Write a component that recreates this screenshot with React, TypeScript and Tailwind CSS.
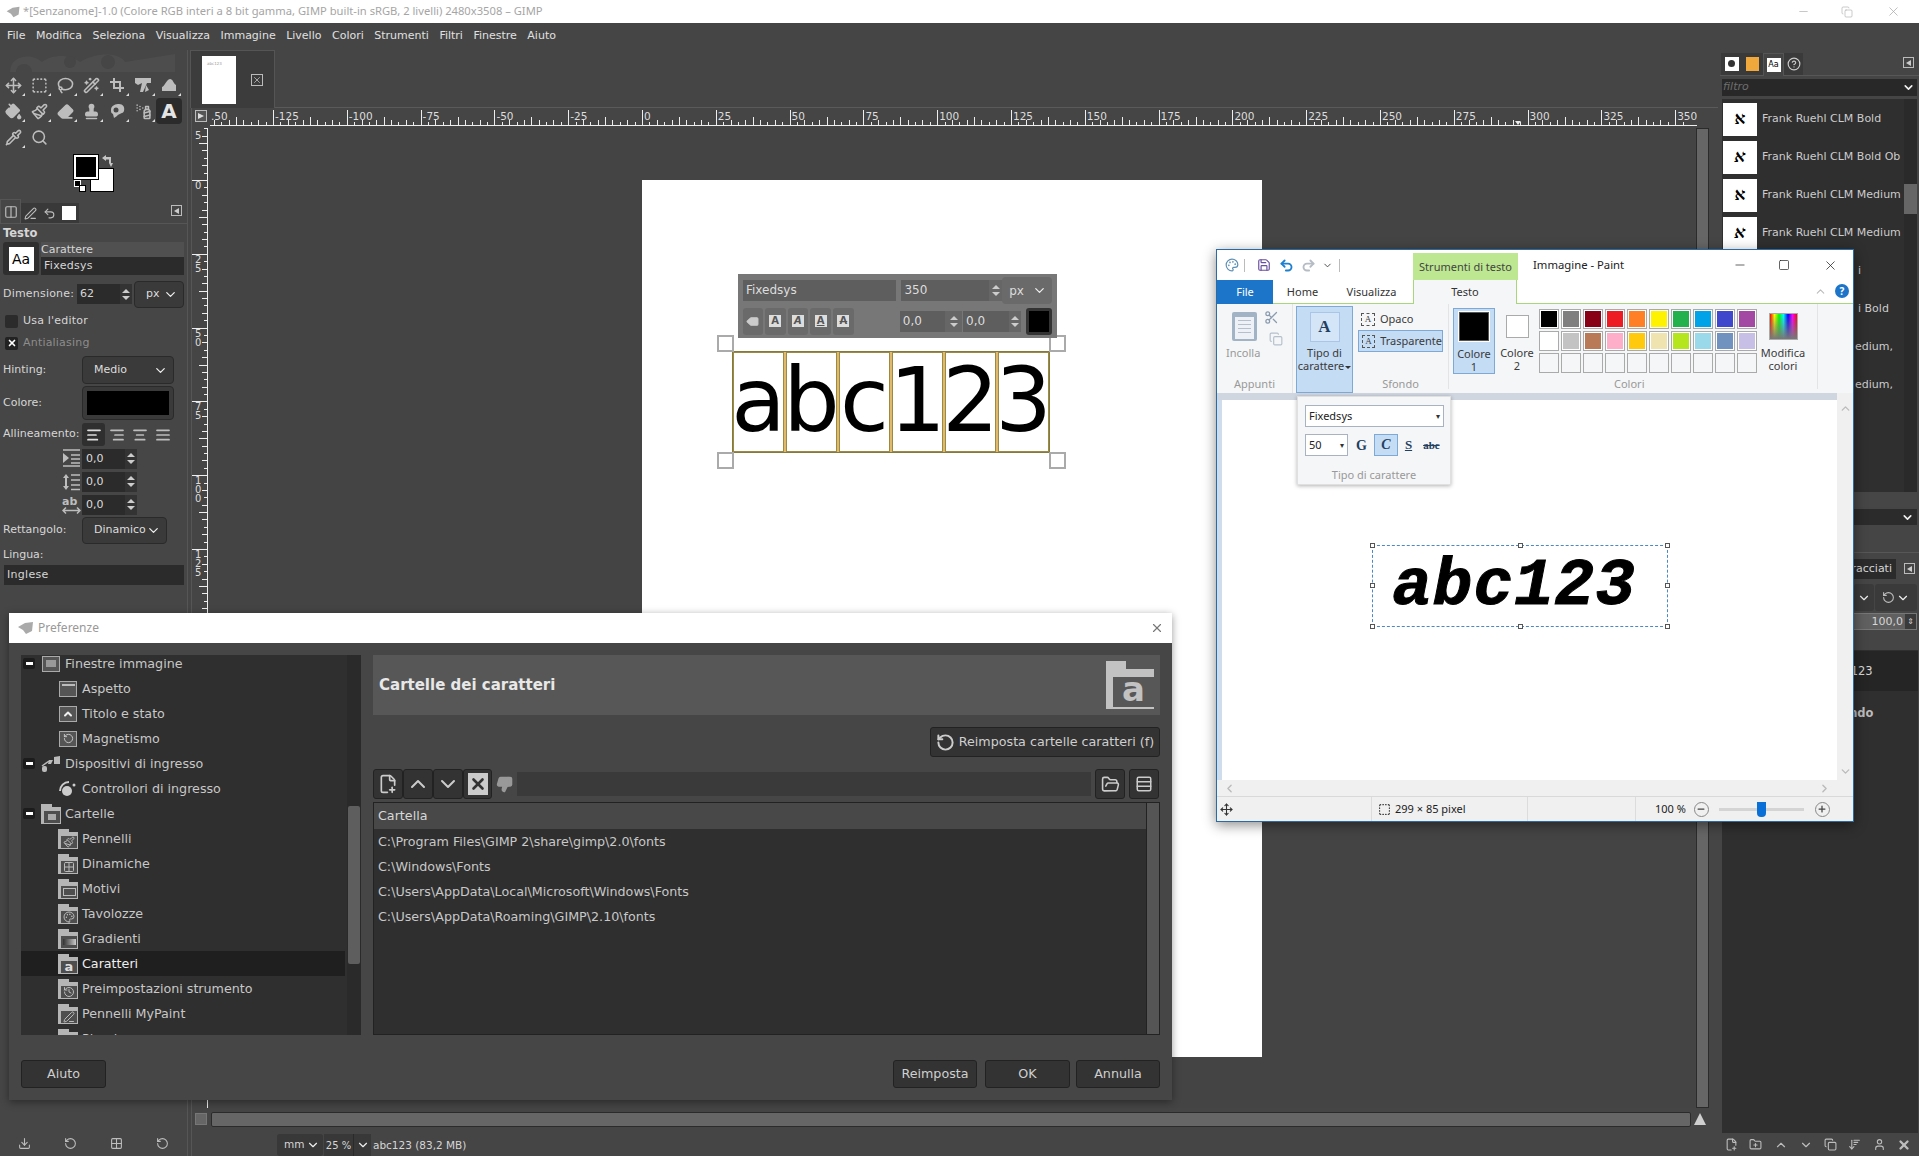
import React from "react";
import {
  Move, SquareDashed, Lasso, Wand2, PaintBucket, Paintbrush, Eraser, Stamp, SprayCan, Pipette, Search,
  ChevronDown, ChevronUp, ChevronLeft, ChevronRight, Undo2, Redo2, Save, Scissors, Copy, Minus, X, Square,
  FilePlus2, ThumbsDown, FolderOpen, Columns2, RotateCcw, Plus, AlignLeft, AlignRight, AlignCenter, AlignJustify,
  Rows3, Palette, Download, FolderPlus, Copy as Dup, ArrowDownWideNarrow, User, History, PenLine, Grid2x2, CircleHelp, Delete
} from "lucide-react";

const IC = "#bdbdbd";

function Spin({ w = 12, h = 20 }: { w?: number; h?: number }) {
  return (
    <div className="flex flex-col items-center justify-center gap-[3px] bg-[#333]" style={{ width: w, height: h }}>
      <div className="w-0 h-0 border-x-[4px] border-x-transparent border-b-[4px] border-b-[#ccc]" />
      <div className="w-0 h-0 border-x-[4px] border-x-transparent border-t-[4px] border-t-[#ccc]" />
    </div>
  );
}

function Combo({ label, w, h = 28 }: { label: string; w: number; h?: number }) {
  return (
    <div className="flex items-center justify-between bg-[#3a3a3a] border border-[#2a2a2a] rounded-[4px] pl-[11px] pr-[5px] text-[#ddd] shrink-0" style={{ width: w, height: h }}>
      <span>{label}</span>
      <ChevronDown size={15} color="#eee" strokeWidth={2} />
    </div>
  );
}

function SpinRow({ icon }: { icon: React.ReactNode }) {
  return (
    <div className="flex items-center h-[23px] pl-[60px]">
      <div className="w-[22px] flex justify-center">{icon}</div>
      <div className="w-[43px] h-[20px] bg-[#2b2b2b] text-[#ddd] pl-[4px] leading-[20px]">0,0</div>
      <Spin />
    </div>
  );
}

function Tool({ children, active }: { children: React.ReactNode; active?: boolean }) {
  return (
    <div className={`relative flex items-center justify-center w-[26px] h-[26px] ${active ? "bg-[#2b2b2b] rounded-[4px]" : ""}`}>
      {children}
      {!active && <div className="absolute right-[1px] bottom-[2px] w-0 h-0 border-l-[3px] border-l-transparent border-b-[3px] border-b-[#ddd]" />}
    </div>
  );
}

function LeftDock() {
  const t = { size: 17, color: IC, strokeWidth: 2.2 };
  return (
    <div className="w-[187px] shrink-0 flex flex-col bg-[#464646] text-[#d6d6d6] relative">
      <div className="h-[22px] relative overflow-hidden">
        <svg width="187" height="22" className="absolute left-0 top-0">
          <path d="M10 22 C 10 6, 30 2, 42 12 C 52 4, 70 4, 80 12 C 95 2, 120 2, 125 12 L 175 4 L 175 22 Z" fill="#4d4d4d" />
          <circle cx="24" cy="22" r="8" fill="#464646" /><circle cx="70" cy="12" r="6" fill="#464646" /><circle cx="108" cy="12" r="7" fill="#464646" />
        </svg>
      </div>
      <div className="grid grid-cols-[repeat(7,26px)] auto-rows-[26px]">
        <Tool><Move {...t} /></Tool>
        <Tool><SquareDashed {...t} /></Tool>
        <Tool><Lasso {...t} /></Tool>
        <Tool><Wand2 {...t} /></Tool>
        <Tool>
          <svg width="16" height="16" viewBox="0 0 16 16"><path d="M1 4 H4 V1 H6 V4 H12 V10 H15 V12 H12 V15 H10 V12 H4 V10 H10 V6 H6 V10 H4 V6 H1 Z" fill={IC} /></svg>
        </Tool>
        <Tool>
          <svg width="18" height="18" viewBox="0 0 18 18"><path d="M1 2 H17 V7 H13 L9 16 H6 L8 7 L4 9 L1 7 Z" fill={IC} /><path d="M12 9 L15 14 L11 16 Z" fill={IC} /></svg>
        </Tool>
        <Tool>
          <svg width="18" height="18" viewBox="0 0 18 18"><path d="M2 15 L2 11 C5 10 6 4 10 3 C13 3 13 7 16 9 L16 15 Z" fill={IC} /></svg>
        </Tool>
        <Tool><PaintBucket {...t} fill={IC} /></Tool>
        <Tool><Paintbrush {...t} /></Tool>
        <Tool><Eraser {...t} fill={IC} /></Tool>
        <Tool><Stamp {...t} fill={IC} /></Tool>
        <Tool>
          <svg width="18" height="18" viewBox="0 0 18 18"><path d="M3 8 C3 3 8 2 11 2 C15 2 17 5 16 9 C15 12 11 11 9 14 L6 16 L5 12 C3 11 3 10 3 8 Z" fill={IC} /><circle cx="8" cy="8" r="2.5" fill="#464646" /></svg>
        </Tool>
        <Tool><SprayCan {...t} /></Tool>
        <Tool active><span className="text-[20px] font-bold text-[#e4e4e4] leading-none">A</span></Tool>
        <Tool><Pipette {...t} /></Tool>
        <div className="flex items-center justify-center w-[26px] h-[26px]"><Search {...t} /></div>
      </div>
      <div className="relative h-[49px] shrink-0">
        <div className="absolute left-[90px] top-[18px] w-[24px] h-[24px] bg-white border border-black" />
        <div className="absolute left-[74px] top-[5px] w-[24px] h-[24px] bg-black border-2 border-white outline outline-1 outline-black" />
        <div className="absolute left-[74px] top-[30px] w-[7px] h-[7px] bg-black border border-white" />
        <div className="absolute left-[79px] top-[35px] w-[7px] h-[7px] bg-white border border-black" />
        <svg width="14" height="14" viewBox="0 0 14 14" className="absolute left-[101px] top-[4px]">
          <path d="M1 4 L5 1 V3 H10 V9 H12 L10 13 L8 9 H8 V5.5 H5 V7 Z" fill="#c4c4c4" />
        </svg>
      </div>
      <div className="h-[25px] flex items-end border-b border-[#565656] relative shrink-0">
        <div className="w-[21px] h-[24px] flex items-center justify-center bg-[#464646] border border-[#555] border-b-0"><Columns2 size={14} color={IC} /></div>
        <div className="w-[19px] h-[20px] flex items-center justify-center bg-[#393939]"><PenLine size={13} color={IC} /></div>
        <div className="w-[19px] h-[20px] flex items-center justify-center bg-[#393939]"><Undo2 size={13} color={IC} /></div>
        <div className="w-[20px] h-[20px] flex items-center justify-center bg-[#393939]"><div className="w-[14px] h-[14px] bg-white" /></div>
        <div className="absolute right-[5px] top-[6px] w-[11px] h-[11px] border border-[#bbb] flex items-center justify-center">
          <div className="w-0 h-0 border-y-[3px] border-y-transparent border-r-[5px] border-r-[#ccc]" />
        </div>
      </div>
      <div className="h-[18px] pl-[3px] leading-[18px] font-bold text-[11.5px]">Testo</div>
      <div className="flex h-[33px] pl-[3px]">
        <div className="w-[36px] h-[33px] bg-[#2f2f2f] rounded-[3px] flex items-center justify-center">
          <div className="w-[25px] h-[24px] bg-white text-black text-[14px] text-center leading-[24px]">Aa</div>
        </div>
        <div className="ml-[2px] w-[143px] flex flex-col">
          <div className="h-[15px] bg-[#505050] leading-[15px] text-[11px]">Carattere</div>
          <div className="h-[18px] bg-[#2b2b2b] leading-[18px] pl-[3px] tracking-[0.3px]">Fixedsys</div>
        </div>
      </div>
      <div className="flex items-center h-[28px] mt-[5px] pl-[3px]">
        <span className="w-[74px] tracking-[0.2px] whitespace-nowrap">Dimensione:</span>
        <div className="w-[43px] h-[20px] bg-[#2b2b2b] leading-[20px] pl-[3px]">62</div>
        <Spin />
        <div className="ml-[2px]"><Combo label="px" w={50} h={27} /></div>
      </div>
      <div className="flex items-center h-[16px] mt-[5px] pl-[5px] gap-[5px]">
        <div className="w-[13px] h-[13px] bg-[#2b2b2b] rounded-[2px]" /><span className="tracking-[0.2px]">Usa l'editor</span>
      </div>
      <div className="flex items-center h-[16px] mt-[6px] pl-[5px] gap-[5px] text-[#8d8d8d]">
        <div className="w-[13px] h-[13px] bg-[#222] rounded-[2px] flex items-center justify-center"><X size={10} color="#fff" strokeWidth={4} /></div><span className="tracking-[0.2px]">Antialiasing</span>
      </div>
      <div className="flex items-center h-[28px] mt-[5px] pl-[3px]">
        <span className="w-[79px]">Hinting:</span><Combo label="Medio" w={92} />
      </div>
      <div className="flex items-center h-[34px] mt-[2px] pl-[3px]">
        <span className="w-[79px]">Colore:</span>
        <div className="w-[92px] h-[34px] bg-[#3a3a3a] border border-[#2a2a2a] rounded-[4px] flex items-center justify-center"><div className="w-[82px] h-[24px] bg-black" /></div>
      </div>
      <div className="flex items-center h-[23px] mt-[3px] pl-[3px]">
        <span className="w-[79px] whitespace-nowrap">Allineamento:</span>
        <div className="w-[23px] h-[23px] bg-[#2f2f2f] rounded-[3px] flex items-center justify-center"><AlignLeft size={16} color="#ddd" strokeWidth={2.6} /></div>
        <div className="w-[23px] flex justify-center"><AlignRight size={16} color={IC} strokeWidth={2.6} /></div>
        <div className="w-[23px] flex justify-center"><AlignCenter size={16} color={IC} strokeWidth={2.6} /></div>
        <div className="w-[23px] flex justify-center"><AlignJustify size={16} color={IC} strokeWidth={2.6} /></div>
      </div>
      <div className="mt-[1px]">
        <SpinRow icon={
          <svg width="19" height="19" viewBox="0 0 19 19"><path d="M1 1 H18 M9 6 H18 M9 10 H18 M1 17 H18 M9 14 H18" stroke={IC} strokeWidth="1.6" /><path d="M1 4 L7 9 L1 14 Z" fill={IC} /></svg>
        } />
        <SpinRow icon={
          <svg width="19" height="18" viewBox="0 0 19 18"><path d="M9 2 H18 M9 7 H18 M9 12 H18 M9 16.5 H18" stroke={IC} strokeWidth="1.6" /><path d="M4 1 L7 5 H5 V13 H7 L4 17 L1 13 H3 V5 H1 Z" fill={IC} /></svg>
        } />
        <SpinRow icon={
          <svg width="19" height="20" viewBox="0 0 19 20"><text x="0" y="10" fontSize="11" fontFamily="DejaVu Sans" fontWeight="bold" fill={IC}>ab</text><path d="M1 15.5 H18 M4 12.5 L1 15.5 L4 18.5 M15 12.5 L18 15.5 L15 18.5" stroke={IC} strokeWidth="1.5" fill="none" /></svg>
        } />
      </div>
      <div className="flex items-center h-[27px] mt-[1px] pl-[3px]">
        <span className="w-[79px]">Rettangolo:</span><Combo label="Dinamico" w={85} h={27} />
      </div>
      <div className="h-[16px] mt-[3px] pl-[3px] leading-[16px]">Lingua:</div>
      <div className="mt-[2px] ml-[4px] w-[180px] h-[20px] bg-[#2b2b2b] leading-[20px] pl-[3px] tracking-[0.3px]">Inglese</div>
      <div className="flex-1" />
      <div className="h-[25px] flex items-center justify-between px-[18px] pr-[18px]">
        <Download size={13} color={IC} /><RotateCcw size={13} color={IC} /><Grid2x2 size={13} color={IC} /><RotateCcw size={13} color={IC} />
      </div>
    </div>
  );
}

function HRuler() {
  const ticks: React.ReactNode[] = [];
  const x0 = 642 - 192;
  for (let k = -61; k < 142; k++) {
    const x = Math.round(x0 + k * 7.38);
    if (x < 18 || x > 1505) continue;
    const h = k % 10 === 0 ? 15 : k % 5 === 0 ? 8 : k % 2 === 0 ? 5 : 3;
    ticks.push(<line key={k} x1={x + 0.5} x2={x + 0.5} y1={17} y2={17 - h} stroke="#eee" />);
  }
  const labels: React.ReactNode[] = [];
  for (let v = -125; v <= 350; v += 25) {
    const x = x0 + (v / 25) * 73.8;
    labels.push(<text key={v} x={x + 2} y={12} fill="#ddd" fontSize="10.5" fontFamily="DejaVu Sans">{v}</text>);
  }
  return (
    <svg width="1505" height="20" className="block shrink-0">
      <line x1="18" x2="1505" y1="17.5" y2="17.5" stroke="#eee" />
      {ticks}
      {labels}
      <text x="19" y="12" fill="#ddd" fontSize="10.5" fontFamily="DejaVu Sans">.50</text>
      <rect x="3.5" y="2.5" width="11" height="11" fill="#555" stroke="#bbb" />
      <path d="M6 5 L12 8 L6 11 Z" fill="#ddd" />
      <path d="M1323 13 h6 l-3 4 Z" fill="#eee" />
    </svg>
  );
}

function VRuler() {
  const ticks: React.ReactNode[] = [];
  for (let k = -7; k < 100; k++) {
    const y = Math.round(52 + k * 7.38);
    const w = k % 10 === 0 ? 15 : k % 5 === 0 ? 8 : k % 2 === 0 ? 5 : 3;
    ticks.push(<line key={k} y1={y + 0.5} y2={y + 0.5} x1={15} x2={15 - w} stroke="#eee" />);
  }
  const vals = [-25, 0, 25, 50, 75, 100, 125, 150];
  return (
    <svg width="18" height="980" className="block shrink-0">
      <line x1="15.5" x2="15.5" y1="0" y2="980" stroke="#eee" />
      {ticks}
      {vals.map((v) => {
        const y = 52 + (v / 25) * 73.8;
        const s = v < 0 ? "5" : String(v);
        return s.split("").map((c, i) => (
          <text key={v + "-" + i} x="3" y={(v < 0 ? 11 : y + 9) + i * 9} fill="#ddd" fontSize="10" fontFamily="DejaVu Sans">{c}</text>
        ));
      })}
    </svg>
  );
}

function Canvas() {
  const cells = ["a", "b", "c", "1", "2", "3"];
  const Handle = ({ cls }: { cls: string }) => <div className={`absolute w-[17px] h-[17px] bg-white border-2 border-[#aaa] ${cls}`} />;
  const Sp = ({ w }: { w: number }) => (
    <div className="h-[21px] bg-[#666] flex flex-col items-center justify-center gap-[3px]" style={{ width: w }}>
      <div className="w-0 h-0 border-x-[4px] border-x-transparent border-b-[4px] border-b-[#ccc]" />
      <div className="w-0 h-0 border-x-[4px] border-x-transparent border-t-[4px] border-t-[#ccc]" />
    </div>
  );
  return (
    <div className="flex-1 relative overflow-hidden bg-[#444]">
      <div className="absolute left-[432px] top-[52px] w-[620px] h-[877px] bg-white">
        <div className="absolute left-[90px] top-[171px] w-[318px] h-[102px] flex gap-[2px] border border-[#857a3b] bg-[#e0ba6a]">
          {cells.map((c, i) => (
            <div key={i} className="flex-1 min-w-0 flex items-center justify-center bg-white border border-[#9a8a45] text-black text-[89px] leading-none font-['DejaVu_Sans'] overflow-visible">
              <span className="-mt-[4px]">{c}</span>
            </div>
          ))}
        </div>
        <Handle cls="left-[75px] top-[155px]" />
        <Handle cls="left-[407px] top-[155px]" />
        <Handle cls="left-[75px] top-[272px]" />
        <Handle cls="left-[407px] top-[272px]" />
        <div className="absolute left-[96px] top-[94px] w-[319px] h-[64px] bg-[#777] px-[5px] pt-[3px] text-[#ddd] text-[12px]">
          <div className="flex items-center h-[27px]">
            <div className="w-[154px] h-[21px] bg-[#5e5e5e] pl-[3px] leading-[21px]">Fixedsys</div>
            <div className="ml-[5px] w-[88px] h-[21px] bg-[#5e5e5e] pl-[3px] leading-[21px]">350</div>
            <Sp w={13} />
            <div className="w-[50px] h-[27px] bg-[#6a6a6a] rounded-[4px] flex items-center justify-between pl-[7px] pr-[5px]"><span>px</span><ChevronDown size={15} color="#eee" /></div>
          </div>
          <div className="flex items-center h-[28px] mt-[3px]">
            <div className="w-[20px] h-[27px] bg-[#6a6a6a] rounded-[3px] flex items-center justify-center"><Delete size={13} color="#ccc" fill="#ccc" /></div>
            {["", "italic", "underline", "line-through"].map((s, i) => (
              <div key={i} className="ml-[2px] w-[21px] h-[27px] bg-[#6a6a6a] rounded-[3px] flex items-center justify-center">
                <div className={`w-[12px] h-[12px] bg-[#ddd] text-[#555] font-bold text-[10px] leading-[12px] text-center ${s}`}>A</div>
              </div>
            ))}
            <div className="ml-[46px] w-[46px] h-[21px] bg-[#5e5e5e] pl-[3px] leading-[21px]">0,0</div>
            <Sp w={17} />
            <div className="ml-[1px] w-[47px] h-[21px] bg-[#5e5e5e] pl-[3px] leading-[21px]">0,0</div>
            <Sp w={12} />
            <div className="ml-[5px] w-[26px] h-[27px] bg-[#333] rounded-[3px] flex items-center justify-center"><div className="w-[20px] h-[21px] bg-black" /></div>
          </div>
        </div>
      </div>
    </div>
  );
}

function Center() {
  return (
    <div className="w-[1526px] shrink-0 flex flex-col">
      <div className="h-[58px] shrink-0 flex border-b border-[#5a5a5a]">
        <div className="w-[85px] ml-[-2px] h-[58px] bg-[#3c3c3c] border border-[#555] border-b-0 flex items-center pl-[11px]">
          <div className="w-[34px] h-[48px] bg-white pt-[6px] pl-[5px] text-[4px] text-[#999] leading-none">abc123</div>
          <div className="ml-[15px] w-[12px] h-[12px] border border-[#bbb] flex items-center justify-center"><X size={10} color="#bbb" /></div>
        </div>
      </div>
      <div className="flex-1 flex flex-col min-h-0">
        <HRuler />
        <div className="flex-1 flex min-h-0">
          <VRuler />
          <Canvas />
          <div className="w-[13px] ml-[1px] bg-[#666] border border-[#2b2b2b]" />
          <div className="w-[9px] shrink-0" />
        </div>
        <div className="h-[22px] shrink-0 flex items-center">
          <div className="ml-[3px] w-[12px] h-[12px] bg-[#666] border border-[#777]" />
          <div className="ml-[4px] w-[1480px] h-[15px] bg-[#666] border border-[#2b2b2b] rounded-[2px]" />
          <div className="ml-[3px] w-0 h-0 border-x-[6px] border-x-transparent border-b-[12px] border-b-[#cfcfcf]" />
        </div>
      </div>
      <div className="h-[26px] shrink-0 flex items-end pl-[85px] text-[#d6d6d6] text-[10.5px]">
        <div className="w-[46px] h-[22px] bg-[#383838] rounded-[3px] flex items-center justify-between pl-[7px] pr-[3px]"><span>mm</span><ChevronDown size={14} color="#eee" /></div>
        <div className="ml-[1px] w-[29px] h-[22px] bg-[#383838] flex items-center justify-center text-[10px]">25 %</div>
        <div className="w-[18px] h-[22px] bg-[#383838] border-l border-[#2a2a2a] flex items-center justify-center"><ChevronDown size={14} color="#eee" /></div>
        <div className="ml-[2px] h-[22px] leading-[22px]">abc123 (83,2 MB)</div>
      </div>
    </div>
  );
}

function RightDock() {
  const Row = ({ name, italic }: { name: string; italic?: boolean }) => (
    <div className="h-[38px] flex items-center shrink-0">
      <div className={`w-[34px] h-[33px] shrink-0 bg-white flex items-center justify-center text-black font-bold text-[17px] font-['Liberation_Serif'] ${italic ? "italic" : ""}`}>א</div>
      <span className="ml-[5px] text-[11px] text-[#ccc] whitespace-nowrap">{name}</span>
    </div>
  );
  const Hidden = ({ text, left }: { text: string; left: number }) => (
    <div className="h-[38px] shrink-0 text-[#ccc] text-[11px] leading-[38px] whitespace-nowrap" style={{ paddingLeft: left }}>{text}</div>
  );
  return (
    <div className="flex-1 flex flex-col text-[#d6d6d6] pl-[2px] min-w-0">
      <div className="h-[24px] mt-[2px] shrink-0 flex items-center border-b border-[#575757] relative">
        <div className="ml-[1px] flex h-[22px] bg-[#3a3a3a]">
          <div className="w-[21px] flex items-center justify-center"><div className="w-[14px] h-[14px] bg-white flex items-center justify-center"><div className="w-[7px] h-[7px] rounded-full bg-[#333]" /></div></div>
          <div className="w-[21px] flex items-center justify-center"><div className="w-[13px] h-[14px] bg-[#f0a73b]" /></div>
          <div className="w-[21px] h-[23px] bg-[#444] border border-[#555] border-b-0 flex items-center justify-center"><div className="w-[14px] h-[14px] bg-white text-black text-[8px] leading-[14px] text-center">Aa</div></div>
          <div className="w-[19px] flex items-center justify-center"><CircleHelp size={14} color="#ccc" /></div>
        </div>
        <div className="absolute right-[5px] top-[5px] w-[11px] h-[11px] border border-[#bbb] flex items-center justify-center">
          <div className="w-0 h-0 border-y-[3px] border-y-transparent border-r-[5px] border-r-[#ccc]" />
        </div>
      </div>
      <div className="mt-[3px] ml-[2px] w-[195px] h-[17px] bg-[#282828] flex items-center justify-between shrink-0 pr-[2px]">
        <span className="italic text-[#6e6e6e] pl-[1px]">filtro</span><ChevronDown size={13} color="#eee" strokeWidth={3} />
      </div>
      <div className="mt-[3px] ml-[2px] w-[195px] h-[393px] shrink-0 bg-[#2f2f2f] flex overflow-hidden relative">
        <div className="w-[183px] pl-[1px] overflow-hidden flex flex-col pt-[1px]">
          <Row name="Frank Ruehl CLM Bold" />
          <Row name="Frank Ruehl CLM Bold Ob" italic />
          <Row name="Frank Ruehl CLM Medium" />
          <Row name="Frank Ruehl CLM Medium" italic />
          <Hidden text="i" left={135} />
          <Hidden text="i Bold" left={135} />
          <Hidden text="edium," left={132} />
          <Hidden text="edium," left={132} />
        </div>
        <div className="w-[13px] bg-[#2a2a2a] relative">
          <div className="absolute top-[85px] w-[13px] h-[30px] bg-[#666]" />
        </div>
      </div>
      <div className="ml-[2px] w-[195px] h-[15px] shrink-0 bg-[#464646]" />
      <div className="ml-[2px] w-[195px] h-[16px] mt-[2px] bg-[#2b2b2b] shrink-0 flex items-center justify-end pr-[3px]"><ChevronDown size={13} color="#eee" strokeWidth={3} /></div>
      <div className="h-[28px] shrink-0 border-b border-[#575757]" />
      <div className="h-[27px] shrink-0 flex items-center justify-end pr-[4px] mt-[2px]">
        <div className="h-[20px] bg-[#2b2b2b] pr-[4px] pl-[2px] leading-[20px] mr-[8px]">Tracciati</div>
        <div className="w-[11px] h-[11px] border border-[#bbb] flex items-center justify-center">
          <div className="w-0 h-0 border-y-[3px] border-y-transparent border-r-[5px] border-r-[#ccc]" />
        </div>
      </div>
      <div className="h-[27px] mt-[2px] shrink-0 flex items-center justify-end pr-[2px] gap-[1px]">
        <div className="w-[20px] h-[27px] bg-[#3a3a3a] rounded-[3px] flex items-center justify-center"><ChevronDown size={14} color="#eee" /></div>
        <div className="w-[42px] h-[27px] bg-[#3a3a3a] rounded-[3px] flex items-center justify-center gap-[1px]"><RotateCcw size={13} color={IC} /><ChevronDown size={14} color="#eee" /></div>
      </div>
      <div className="h-[17px] mt-[2px] shrink-0 flex justify-end pr-[2px]">
        <div className="w-[65px] h-[17px] bg-[#606060] border border-[#777] flex items-center justify-end leading-none"><span className="pr-[2px]">100,0</span><div className="w-[11px] h-[15px] bg-[#3a3a3a] text-[8px] text-center leading-[15px]">⇕</div></div>
      </div>
      <div className="h-[20px] shrink-0" />
      <div className="ml-[2px] w-[196px] flex-1 bg-[#2f2f2f] flex flex-col min-h-0">
        <div className="h-[40px] mt-[1px] bg-[#252525] text-[11.5px] leading-[40px] pl-[108px] shrink-0">abc123</div>
        <div className="h-[40px] mt-[2px] font-bold text-[#bbb] text-[11.5px] leading-[40px] pl-[106px] shrink-0 whitespace-nowrap">Sfondo</div>
      </div>
      <div className="h-[23px] shrink-0 ml-[2px] flex items-center justify-between pl-[3px] pr-[8px]">
        <FilePlus2 size={13} color={IC} /><FolderPlus size={13} color={IC} /><ChevronUp size={14} color={IC} /><ChevronDown size={14} color={IC} /><Dup size={13} color={IC} /><ArrowDownWideNarrow size={13} color={IC} /><User size={13} color={IC} /><X size={14} color={IC} strokeWidth={4} />
      </div>
    </div>
  );
}

function FolderI({ children, boxed }: { children?: React.ReactNode; boxed?: boolean }) {
  if (boxed)
    return <div className="w-[18px] h-[16px] border border-[#aaa] bg-[#555] flex items-center justify-center">{children}</div>;
  return (
    <div className="relative w-[20px] h-[20px] shrink-0">
      <div className="absolute left-0 top-0 w-[11px] h-[6px] bg-[#b5b5b5]" />
      <div className="absolute left-0 top-[3px] w-[20px] h-[17px] bg-[#b5b5b5] flex items-end justify-end p-[1px]">
        <div className="w-[16px] h-[12px] bg-[#4e4e4e] flex items-center justify-center">{children}</div>
      </div>
    </div>
  );
}

function TreeRow({ label, level, icon, open, sel }: { label: string; level: number; icon: React.ReactNode; open?: boolean; sel?: boolean }) {
  return (
    <div className={`h-[25px] shrink-0 flex items-center relative ${sel ? "bg-[#1f1f1f] text-[#eee]" : "text-[#c8c8c8]"}`}>
      {open && (
        <div className="absolute left-[2px] w-[12px] h-[11px] bg-[#1c1c1c] rounded-[2px] flex items-center justify-center"><div className="w-[7px] h-[3px] bg-white" /></div>
      )}
      <div className="absolute flex items-center justify-center w-[22px]" style={{ left: level ? 36 : 19 }}>{icon}</div>
      <span className="whitespace-nowrap" style={{ marginLeft: level ? 61 : 44 }}>{label}</span>
    </div>
  );
}

function DarkBtn({ children, cls = "" }: { children: React.ReactNode; cls?: string }) {
  return <div className={`bg-[#333] border border-[#222] rounded-[3px] flex items-center justify-center text-[#cfcfcf] ${cls}`}>{children}</div>;
}

function Preferences() {
  const g = { size: 12, color: "#bbb" };
  const paths = [
    "C:\\Program Files\\GIMP 2\\share\\gimp\\2.0\\fonts",
    "C:\\Windows\\Fonts",
    "C:\\Users\\AppData\\Local\\Microsoft\\Windows\\Fonts",
    "C:\\Users\\AppData\\Roaming\\GIMP\\2.10\\fonts",
  ];
  return (
    <div className="absolute left-[9px] top-[613px] w-[1163px] h-[487px] flex flex-col bg-[#464646] shadow-[0_2px_8px_rgba(0,0,0,0.4)] text-[12.7px]">
      <div className="h-[30px] shrink-0 bg-white flex items-center text-[#999] font-['Noto_Sans'] text-[12px]">
        <svg width="18" height="14" viewBox="0 0 18 14" className="ml-[8px] mr-[3px]"><path d="M1 6 L8 2 L16 1 L15 10 L9 13 L6 9 Z" fill="#aaa" /></svg>
        <span>Preferenze</span>
        <div className="flex-1" />
        <X size={14} color="#777" className="mr-[8px]" />
      </div>
      <div className="flex pt-[12px] pl-[12px] h-[392px] shrink-0">
        <div className="w-[340px] h-[380px] bg-[#2f2f2f] overflow-hidden flex relative">
          <div className="w-[324px] flex flex-col -mt-[4px]">
            <TreeRow label="Finestre immagine" level={0} open icon={<FolderI boxed><div className="w-[10px] h-[7px] bg-[#999]" /></FolderI>} />
            <TreeRow label="Aspetto" level={1} icon={<FolderI boxed><div className="w-[13px] h-[10px] border-t-2 border-[#bbb]" /></FolderI>} />
            <TreeRow label="Titolo e stato" level={1} icon={<FolderI boxed><ChevronUp size={12} color="#eee" strokeWidth={4} /></FolderI>} />
            <TreeRow label="Magnetismo" level={1} icon={<FolderI boxed><RotateCcw size={11} color="#ccc" /></FolderI>} />
            <TreeRow label="Dispositivi di ingresso" level={0} open icon={
              <svg width="20" height="18" viewBox="0 0 20 18"><path d="M8 5 H12 L10 9 H7 Z M13 2 L19 1 V9 H13 Z" fill="#bbb" /><path d="M1 11 L8 6 M14 3 L18 8" stroke="#bbb" strokeWidth="1.5" /><rect x="1" y="11" width="5" height="6" rx="2" fill="#bbb" /></svg>
            } />
            <TreeRow label="Controllori di ingresso" level={1} icon={
              <svg width="20" height="18" viewBox="0 0 20 18"><circle cx="9" cy="11" r="5" fill="#ccc" /><path d="M2 11 A9 9 0 0 1 11 2" stroke="#ccc" strokeWidth="2" fill="none" /><circle cx="16" cy="5" r="1.5" fill="#ccc" /></svg>
            } />
            <TreeRow label="Cartelle" level={0} open icon={<FolderI><div className="w-[8px] h-[6px] bg-[#aaa]" /></FolderI>} />
            <TreeRow label="Pennelli" level={1} icon={<FolderI><Paintbrush {...g} /></FolderI>} />
            <TreeRow label="Dinamiche" level={1} icon={<FolderI><Grid2x2 {...g} /></FolderI>} />
            <TreeRow label="Motivi" level={1} icon={<FolderI><div className="w-[13px] h-[8px] border border-[#bbb]" /></FolderI>} />
            <TreeRow label="Tavolozze" level={1} icon={<FolderI><Palette {...g} /></FolderI>} />
            <TreeRow label="Gradienti" level={1} icon={<FolderI><div className="w-[13px] h-[6px] bg-gradient-to-r from-[#333] to-[#ccc]" /></FolderI>} />
            <TreeRow label="Caratteri" level={1} sel icon={<FolderI><span className="text-[13px] font-bold text-[#ddd] leading-none">a</span></FolderI>} />
            <TreeRow label="Preimpostazioni strumento" level={1} icon={<FolderI><History {...g} /></FolderI>} />
            <TreeRow label="Pennelli MyPaint" level={1} icon={<FolderI><PenLine {...g} /></FolderI>} />
            <TreeRow label="Plug-in" level={1} icon={<FolderI />} />
          </div>
          <div className="w-[2px]" />
          <div className="w-[14px] h-full bg-[#2a2a2a] relative">
            <div className="absolute left-[1px] top-[151px] w-[12px] h-[158px] bg-[#5e5e5e] rounded-[2px]" />
          </div>
        </div>
        <div className="ml-[12px] w-[787px] flex flex-col">
          <div className="h-[60px] bg-[#575757] flex items-center justify-between pl-[6px] pr-[6px] shrink-0">
            <span className="font-bold text-[#e8e8e8] text-[15px]">Cartelle dei caratteri</span>
            <div className="relative w-[48px] h-[48px]">
              <div className="absolute left-0 top-0 w-[20px] h-[10px] bg-[#c2c2c2]" />
              <div className="absolute left-0 top-[8px] w-[48px] h-[40px] bg-[#c2c2c2]" />
              <div className="absolute left-[7px] top-[16px] w-[41px] h-[30px] bg-[#575757] flex items-center justify-center"><span className="text-[34px] leading-none font-bold text-[#c2c2c2] -mt-[6px]">a</span></div>
            </div>
          </div>
          <div className="mt-[12px] h-[30px] flex justify-end shrink-0">
            <DarkBtn cls="w-[230px] h-[30px] gap-[4px]"><RotateCcw size={19} color="#ccc" strokeWidth={2.5} /><span className="whitespace-nowrap">Reimposta cartelle caratteri (f)</span></DarkBtn>
          </div>
          <div className="mt-[12px] h-[30px] flex items-center shrink-0">
            <DarkBtn cls="w-[30px] h-[30px]"><FilePlus2 size={20} color="#ccc" /></DarkBtn>
            <DarkBtn cls="w-[30px] h-[30px]"><ChevronUp size={24} color="#ccc" /></DarkBtn>
            <DarkBtn cls="w-[30px] h-[30px]"><ChevronDown size={24} color="#ccc" /></DarkBtn>
            <DarkBtn cls="w-[29px] h-[30px]"><div className="w-[20px] h-[22px] bg-[#ccc] flex items-center justify-center"><X size={18} color="#333" strokeWidth={3.5} /></div></DarkBtn>
            <div className="w-[25px] flex justify-center"><ThumbsDown size={17} color="#999" fill="#999" /></div>
            <div className="w-[574px] h-[24px] bg-[#3a3a3a]" />
            <DarkBtn cls="ml-[4px] w-[30px] h-[30px]"><FolderOpen size={19} color="#ccc" /></DarkBtn>
            <DarkBtn cls="ml-[4px] w-[30px] h-[30px]"><Rows3 size={18} color="#ccc" /></DarkBtn>
          </div>
          <div className="mt-[3px] h-[233px] flex bg-[#2f2f2f] border border-[#222]">
            <div className="flex-1 flex flex-col text-[#c8c8c8]">
              <div className="h-[26px] bg-[#484848] leading-[26px] pl-[4px] text-[#d8d8d8]">Cartella</div>
              {paths.map((p) => <div key={p} className="h-[25px] leading-[25px] pl-[4px] whitespace-nowrap">{p}</div>)}
            </div>
            <div className="w-[13px] bg-[#555] border-l border-[#222]" />
          </div>
        </div>
      </div>
      <div className="h-[28px] flex items-center pl-[12px] pr-[12px] mt-[25px] shrink-0">
        <DarkBtn cls="w-[85px] h-[28px]">Aiuto</DarkBtn>
        <div className="flex-1" />
        <DarkBtn cls="w-[84px] h-[28px]">Reimposta</DarkBtn>
        <DarkBtn cls="ml-[8px] w-[85px] h-[28px]">OK</DarkBtn>
        <DarkBtn cls="ml-[6px] w-[84px] h-[28px]">Annulla</DarkBtn>
      </div>
    </div>
  );
}

const PAL = [
  ["#000000", "#7f7f7f", "#880015", "#ed1c24", "#ff7f27", "#fff200", "#22b14c", "#00a2e8", "#3f48cc", "#a349a4"],
  ["#ffffff", "#c3c3c3", "#b97a57", "#ffaec9", "#ffc90e", "#efe4b0", "#b5e61d", "#99d9ea", "#7092be", "#c8bfe7"],
  Array(10).fill(""),
];

function SelectionHandles() {
  const pos = ["left-[-3px] top-[-3px]", "left-[145px] top-[-3px]", "right-[-3px] top-[-3px]", "left-[-3px] top-[37px]", "right-[-3px] top-[37px]", "left-[-3px] bottom-[-3px]", "left-[145px] bottom-[-3px]", "right-[-3px] bottom-[-3px]"];
  return <>{pos.map((p) => <div key={p} className={`absolute w-[5px] h-[5px] bg-white border border-[#555] ${p}`} />)}</>;
}

function Paint() {
  return (
    <div className="absolute left-[1216px] top-[249px] w-[638px] h-[573px] bg-white border border-[#2a6aa5] flex flex-col font-['Noto_Sans'] text-[11px] text-[#333] shadow-[0_3px_12px_rgba(0,0,0,0.45)]">
      <div className="h-[30px] shrink-0 flex items-center relative">
        <Palette size={14} color="#5d8fb5" className="ml-[8px]" />
        <div className="ml-[5px] w-px h-[13px] bg-[#bbb]" />
        <Save size={14} color="#6a4f9e" className="ml-[12px]" />
        <Undo2 size={15} color="#1d80d0" strokeWidth={3} className="ml-[8px]" />
        <Redo2 size={15} color="#b5bcc4" strokeWidth={3} className="ml-[7px]" />
        <ChevronDown size={11} color="#444" className="ml-[6px]" />
        <div className="ml-[6px] w-px h-[13px] bg-[#bbb]" />
        <div className="ml-[73px] w-[105px] h-[27px] mt-[3px] bg-[#bde790] text-[#444] text-center leading-[27px] whitespace-nowrap">Strumenti di testo</div>
        <span className="ml-[15px] text-[#222] text-[11.3px]">Immagine - Paint</span>
        <div className="flex-1" />
        <Minus size={14} color="#222" strokeWidth={1.2} className="mr-[31px]" />
        <Square size={12} color="#222" strokeWidth={1.4} className="mr-[33px]" />
        <X size={15} color="#222" strokeWidth={1.2} className="mr-[15px]" />
      </div>
      <div className="h-[24px] shrink-0 flex border-b border-[#a8d67c] relative">
        <div className="w-[56px] h-[24px] bg-[#1c75c8] text-white text-center leading-[24px]">File</div>
        <div className="w-[59px] text-center leading-[24px]">Home</div>
        <div className="w-[79px] text-center leading-[24px]">Visualizza</div>
        <div className="ml-[2px] w-[104px] h-[24px] bg-[#f5f6f7] border-x border-[#a8d67c] text-center leading-[24px]">Testo</div>
        <ChevronUp size={13} color="#bbb" className="absolute right-[26px] top-[5px]" />
        <div className="absolute right-[4px] top-[4px] w-[14px] h-[14px] rounded-full bg-[#1c75c8] text-white text-[10px] font-bold text-center leading-[14px]">?</div>
      </div>
      <div className="h-[89px] shrink-0 bg-[#f5f6f7] flex text-[#3a3a3a] relative">
        <div className="w-[76px] border-r border-[#e2e4e7] flex flex-col relative shrink-0">
          <div className="absolute left-[15px] top-[8px] w-[25px] h-[29px] bg-[#a3b3c6] rounded-[2px] flex items-center justify-center">
            <div className="w-[19px] h-[22px] bg-[#eef2f6] mt-[3px] flex flex-col gap-[3px] p-[3px]">
              <div className="h-px bg-[#b4c0ce]" /><div className="h-px bg-[#b4c0ce]" /><div className="h-px bg-[#b4c0ce]" /><div className="h-px bg-[#b4c0ce]" />
            </div>
          </div>
          <Scissors size={15} color="#8a9bb0" className="absolute left-[47px] top-[6px]" />
          <Copy size={14} color="#b5c0cd" className="absolute left-[52px] top-[28px]" />
          <span className="absolute left-[9px] top-[41px] text-[#999]">Incolla</span>
          <span className="absolute bottom-[1px] w-full text-center text-[#999]">Appunti</span>
        </div>
        <div className="ml-[3px] mt-[2px] w-[57px] h-[87px] bg-[#c5dcf5] border border-[#7ea9d6] flex flex-col items-center shrink-0">
          <div className="mt-[5px] w-[30px] h-[30px] bg-[#d4e5f8] border border-[#a9c6e8] flex items-center justify-center font-['Liberation_Serif'] font-bold text-[17px] text-[#24405f]">A</div>
          <div className="mt-[4px] text-center leading-[13px] whitespace-nowrap">Tipo di<br />carattere<span className="inline-block ml-[1px] mb-[1px] w-0 h-0 border-x-[3px] border-x-transparent border-t-[3px] border-t-[#333]" /></div>
        </div>
        <div className="ml-[5px] w-[85px] flex flex-col shrink-0 relative">
          <div className="h-[22px] mt-[4px] flex items-center pl-[3px]"><span className="w-[14px] h-[13px] mr-[5px] border border-dashed border-[#555] text-[9px] font-['Liberation_Serif'] leading-[11px] text-center">A</span>Opaco</div>
          <div className="h-[22px] flex items-center pl-[3px] bg-[#c5dcf5] border border-[#7ea9d6]"><span className="w-[14px] h-[13px] mr-[5px] border border-dashed border-[#555] text-[9px] font-['Liberation_Serif'] leading-[11px] text-center">A</span>Trasparente</div>
          <span className="absolute bottom-[1px] w-full text-center text-[#999]">Sfondo</span>
        </div>
        <div className="ml-[5px] w-px h-[85px] bg-[#e2e4e7]" />
        <div className="ml-[4px] mt-[4px] w-[42px] h-[66px] bg-[#c5dcf5] border border-[#7ea9d6] flex flex-col items-center shrink-0">
          <div className="mt-[3px] w-[30px] h-[30px] bg-black border border-[#555] outline outline-1 outline-white" />
          <div className="mt-[6px] text-center leading-[13px]">Colore<br />1</div>
        </div>
        <div className="w-[44px] flex flex-col items-center shrink-0 mt-[11px]">
          <div className="w-[23px] h-[23px] bg-white border border-[#aaa]" />
          <div className="mt-[8px] text-center leading-[13px]">Colore<br />2</div>
        </div>
        <div className="mt-[5px] flex flex-col relative shrink-0">
          <div className="flex flex-col gap-[2px]">
            {PAL.map((r, i) => (
              <div key={i} className="flex gap-[2px]">
                {r.map((c, j) => (
                  <div key={j} className={`w-[20px] h-[20px] border border-[#aaa] ${c ? "p-[1px] bg-white" : ""}`}>
                    {c && <div className="w-full h-full" style={{ background: c }} />}
                  </div>
                ))}
              </div>
            ))}
          </div>
        </div>
        <div className="ml-[4px] w-[44px] flex flex-col items-center mt-[9px] shrink-0">
          <div className="w-[29px] h-[27px] border border-[#aaa] bg-[linear-gradient(to_bottom,transparent,#777),linear-gradient(to_right,#f00,#ff0,#0f0,#0ff,#00f,#f0f,#f00)]" />
          <div className="mt-[6px] text-center leading-[13px]">Modifica<br />colori</div>
        </div>
        <div className="ml-[12px] w-px h-[85px] bg-[#e2e4e7]" />
        <span className="absolute left-[397px] bottom-[1px] text-[#999]">Colori</span>
      </div>
      <div className="h-[7px] shrink-0 flex">
        <div className="w-[620px] bg-[#cfd6e0]" /><div className="flex-1 bg-[#f0f0f0]" />
      </div>
      <div className="flex-1 flex min-h-0">
        <div className="w-[5px] bg-[#cfdceb]" />
        <div className="flex-1 bg-white relative">
          <div className="absolute left-[150px] top-[145px] w-[296px] h-[82px] border border-dashed border-[#4a88c7] flex items-center justify-center pr-[12px] pt-[2px]">
            <SelectionHandles />
            <span className="font-['Liberation_Mono'] font-bold italic text-[66px] tracking-[1px] leading-none text-black [-webkit-text-stroke:1px_black] whitespace-nowrap">abc123</span>
          </div>
        </div>
        <div className="w-[16px] bg-[#f0f0f0] flex flex-col items-center justify-between py-[2px]">
          <ChevronUp size={13} color="#bbb" strokeWidth={2.5} /><ChevronDown size={13} color="#bbb" strokeWidth={2.5} />
        </div>
      </div>
      <div className="h-[16px] shrink-0 bg-[#f0f0f0] flex items-center justify-between pl-[6px] pr-[22px]">
        <ChevronLeft size={13} color="#bbb" strokeWidth={2.5} /><ChevronRight size={13} color="#bbb" strokeWidth={2.5} />
      </div>
      <div className="h-[25px] shrink-0 bg-[#f0f0f0] border-t border-[#d9d9d9] flex items-center text-[#222] relative">
        <div className="w-[155px] h-full border-r border-[#dcdcdc] pl-[3px] flex items-center"><Move size={13} color="#333" /></div>
        <div className="w-[156px] h-full border-r border-[#dcdcdc] pl-[6px] flex items-center gap-[4px]"><SquareDashed size={13} color="#333" /><span>299 × 85 pixel</span></div>
        <div className="w-[108px] h-full border-r border-[#dcdcdc]" />
        <span className="ml-[19px]">100 %</span>
        <div className="ml-[8px] w-[15px] h-[15px] rounded-full border border-[#888] flex items-center justify-center"><Minus size={10} color="#444" strokeWidth={3} /></div>
        <div className="ml-[10px] w-[85px] h-[3px] bg-[#d4d4d4] relative">
          <div className="absolute left-[38px] top-[-6px] w-[9px] h-[15px] bg-[#0a6fd6] rounded-b-[4px]" />
        </div>
        <div className="ml-[11px] w-[15px] h-[15px] rounded-full border border-[#888] flex items-center justify-center"><Plus size={10} color="#444" strokeWidth={3} /></div>
      </div>
      <div className="absolute left-[80px] top-[146px] w-[154px] h-[89px] bg-[#f5f6f7] shadow-[0_1px_4px_rgba(0,0,0,0.3)] border border-[#e0e0e0] pt-[8px] pl-[7px]">
        <div className="w-[139px] h-[22px] bg-white border border-[#a9b2c0] flex items-center justify-between px-[3px]"><span className="text-[#222]">Fixedsys</span><span className="text-[8px]">▾</span></div>
        <div className="mt-[7px] flex items-center h-[22px]">
          <div className="w-[43px] h-[22px] bg-white border border-[#a9b2c0] flex items-center justify-between px-[3px]"><span className="text-[#222]">50</span><span className="text-[8px]">▾</span></div>
          <span className="ml-[8px] font-['Liberation_Serif'] font-bold text-[14px] text-[#24405f]">G</span>
          <div className="ml-[7px] w-[24px] h-[22px] bg-[#c5dcf5] border border-[#7ea9d6] text-center leading-[20px] font-['Liberation_Serif'] font-bold italic text-[14px] text-[#24405f]">C</div>
          <span className="ml-[7px] font-['Liberation_Serif'] font-bold underline text-[13px] text-[#24405f]">S</span>
          <span className="ml-[11px] font-['Liberation_Serif'] font-bold line-through text-[11px] text-[#24405f]">abc</span>
        </div>
        <div className="mt-[11px] text-center text-[#999] pr-[7px]">Tipo di carattere</div>
      </div>
    </div>
  );
}

export default function App() {
  const menu = ["File", "Modifica", "Seleziona", "Visualizza", "Immagine", "Livello", "Colori", "Strumenti", "Filtri", "Finestre", "Aiuto"];
  return (
    <div className="relative w-[1919px] h-[1156px] overflow-hidden bg-[#454545] flex flex-col font-['DejaVu_Sans'] text-[11px]">
      <div className="h-[23px] shrink-0 bg-white flex items-center font-['Noto_Sans'] text-[11.2px] text-[#a5a5a5]">
        <svg width="17" height="12" viewBox="0 0 18 14" className="ml-[5px] mr-[1px]"><path d="M1 6 L8 2 L16 1 L15 10 L9 13 L6 9 Z" fill="#aaa" /></svg>
        <span>*[Senzanome]-1.0 (Colore RGB interi a 8 bit gamma, GIMP built-in sRGB, 2 livelli) 2480x3508 – GIMP</span>
        <div className="flex-1" />
        <Minus size={13} color="#aaa" strokeWidth={1.2} className="mr-[31px]" />
        <Copy size={12} color="#aaa" strokeWidth={1.2} className="mr-[33px]" />
        <X size={15} color="#aaa" strokeWidth={1.2} className="mr-[18px]" />
      </div>
      <div className="h-[27px] shrink-0 flex items-center pl-[7px] gap-[10.5px] text-[#e0e0e0] text-[11px]">
        {menu.map((m) => <span key={m}>{m}</span>)}
      </div>
      <div className="flex-1 flex min-h-0">
        <LeftDock />
        <div className="w-[5px] shrink-0 border-x border-[#565656]" />
        <Center />
        <RightDock />
      </div>
      <Preferences />
      <Paint />
    </div>
  );
}
